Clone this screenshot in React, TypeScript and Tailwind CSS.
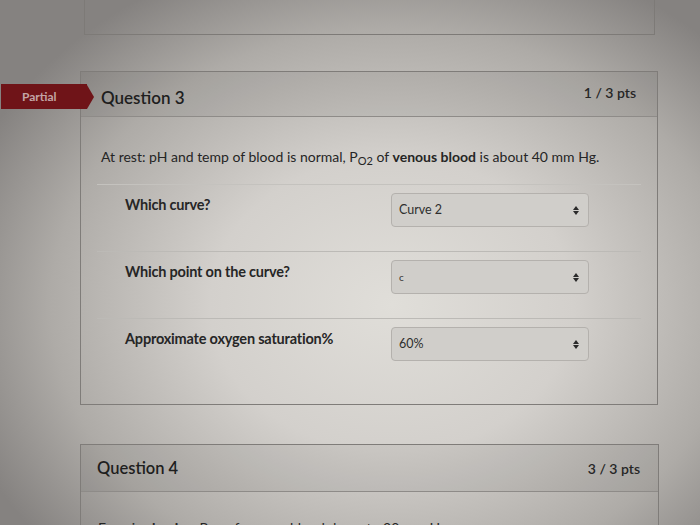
function SelectBox({ value, small }: { value: string; small?: boolean }) {
  return (
    <div className="w-[198px] h-[34px] rounded-[4px] border border-[#b4b1ad] bg-[#d0ceca] flex items-center justify-between pl-[7px] pr-[9px]">
      <span className={small ? "text-[10px] text-[#333]" : "text-[12.5px] text-[#2e2e2e]"}>{value}</span>
      <span className="flex flex-col items-center gap-[1px]">
        <span className="w-0 h-0 border-l-[3px] border-r-[3px] border-b-[4px] border-l-transparent border-r-transparent border-b-[#2a2a2a]" />
        <span className="w-0 h-0 border-l-[3px] border-r-[3px] border-t-[4px] border-l-transparent border-r-transparent border-t-[#2a2a2a]" />
      </span>
    </div>
  );
}

function Row({ label, value, small, last }: { label: string; value: string; small?: boolean; last?: boolean }) {
  return (
    <div className={"flex pl-[28px] pt-[8px] " + (last ? "h-[85px]" : "h-[67px] border-b border-[#bcbab6]")}>
      <div className="w-[266px] pt-[1px] text-[14.5px] font-bold text-[#262626] tracking-[-0.2px]">{label}</div>
      <SelectBox value={value} small={small} />
    </div>
  );
}

export default function App() {
  return (
    <div
      className="h-[525px] w-[700px] overflow-hidden bg-[radial-gradient(ellipse_65%_70%_at_56%_58%,#e0ded9_0%,#d3d0cc_40%,#aeaba7_75%,#858280_100%)]"
      style={{ fontFamily: "Lato, 'Open Sans', sans-serif" }}
    >
      {/* previous question, mostly above the fold */}
      <div className="ml-[84px] w-[571px] h-[60px] mt-[-25px] border border-[#7d7a77]" />

      {/* Question 3 */}
      <div className="relative ml-[80px] mt-[36px] w-[578px] h-[334px] border border-[#7f7c79]">
        <div className="absolute left-[-80px] top-[12px] flex items-center">
          <div className="w-[86px] h-[25px] bg-[#6f1418] flex items-center pl-[21px] text-[12px] font-bold text-[#c3a5a6]">
            Partial
          </div>
          <div className="w-0 h-0 border-t-[12.5px] border-b-[12.5px] border-l-[7px] border-t-transparent border-b-transparent border-l-[#6f1418]" />
        </div>
        <div className="h-[45px] bg-black/[0.05] border-b border-[#8e8b88] flex items-center justify-between pl-[20px] pr-[21px]">
          <span className="text-[17px] font-semibold text-[#1e1e1e] mt-[8px]">Question 3</span>
          <span className="text-[14px] font-semibold text-[#262626] mt-[-3px]">1 / 3 pts</span>
        </div>
        <div className="px-[16px]">
          <div className="h-[68px] pt-[29px] pl-[4px] border-b border-[#c4c2be] text-[14px] text-[#252525]">
            At rest: pH and temp of blood is normal, P
            <sub className="text-[11px] bottom-[-3px]">O2</sub> of <b className="font-bold">venous blood</b> is about 40 mm Hg.
          </div>
          <Row label="Which curve?" value="Curve 2" />
          <Row label="Which point on the curve?" value="c" small />
          <Row label="Approximate oxygen saturation%" value="60%" last />
        </div>
      </div>

      {/* Question 4 */}
      <div className="ml-[80px] mt-[39px] w-[579px] h-[120px] border border-[#7f7c79]">
        <div className="h-[47px] bg-black/[0.05] border-b border-[#8e8b88] flex items-center justify-between pl-[16px] pr-[18px]">
          <span className="text-[16.5px] font-semibold text-[#1e1e1e]">Question 4</span>
          <span className="text-[14px] font-semibold text-[#262626]">3 / 3 pts</span>
        </div>
        <div className="pt-[25px] pl-[17px] text-[14px] text-[#252525]">
          Exercise <b>begins</b>: P<sub className="text-[11px]">O2</sub> of venous blood drops to 20 mm Hg.
        </div>
      </div>
    </div>
  );
}
